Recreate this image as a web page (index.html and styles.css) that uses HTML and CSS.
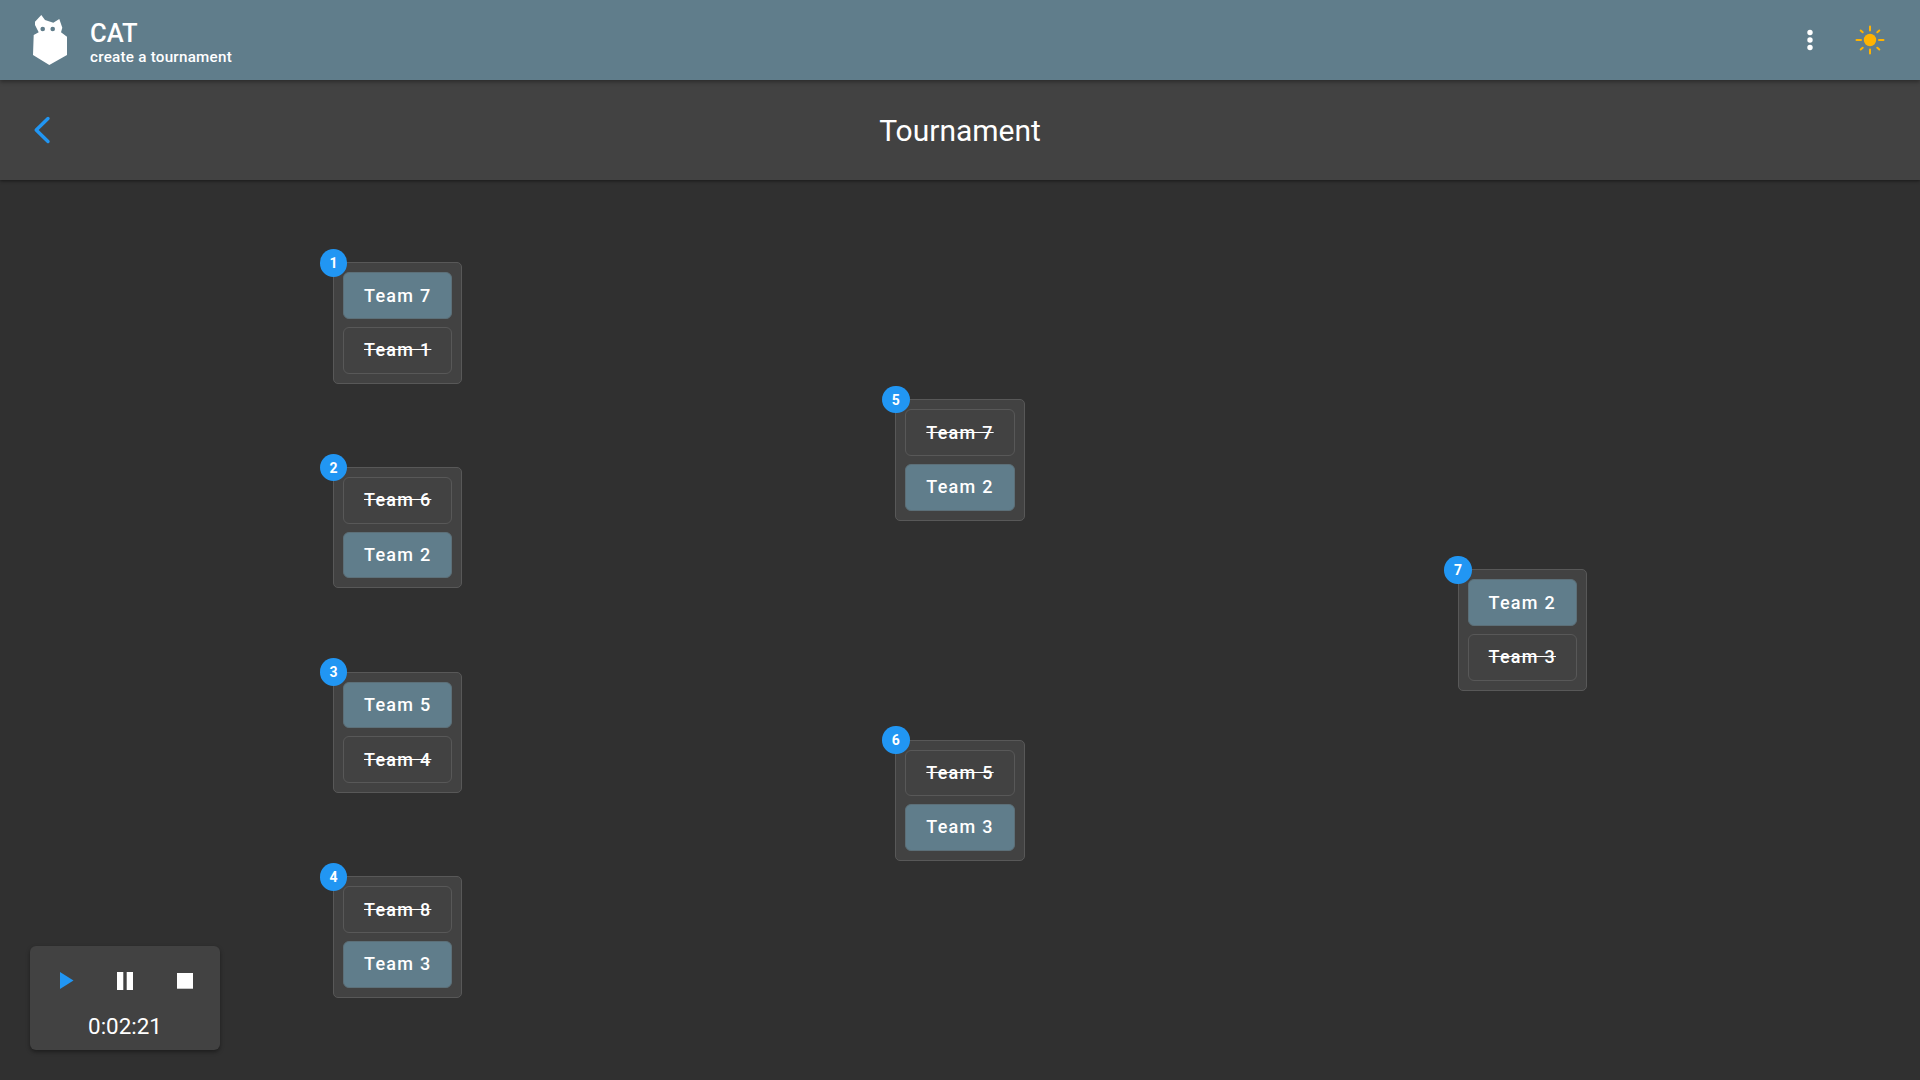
FILE: index.html
```html
<!DOCTYPE html>
<html lang="en">
<head>
<meta charset="utf-8">
<title>CAT - Tournament</title>
<link rel="stylesheet" href="styles.css">
</head>
<body>
<header class="appbar">
  <svg class="logo" width="34" height="50" viewBox="0 0 34 50">
    <path class="logo-fill" d="M8.300 0 L12 5 L20.300 7.700 L26.300 4 L29.300 12.700 L28 17.300 L34 21.700 L34 40 L16.300 50 L0 40 L0.700 20 L5.700 17.300 L2 10 L2 6.700 Z"/>
    <circle class="logo-eye" cx="9.700" cy="14" r="2.300"/>
    <circle class="logo-eye" cx="19.700" cy="14" r="2.300"/>
  </svg>
  <div class="brand">
    <div class="brand-name">CAT</div>
    <div class="brand-sub">create a tournament</div>
  </div>
  <div class="appbar-spacer"></div>
  <button class="icon-btn menu-btn" aria-label="menu">
    <svg width="6" height="20" viewBox="0 0 6 20"><circle cx="3" cy="2.500" r="2.700"/><circle cx="3" cy="10" r="2.700"/><circle cx="3" cy="17.500" r="2.700"/></svg>
  </button>
  <button class="icon-btn sun-btn" aria-label="theme">
    <svg width="30" height="30" viewBox="0 0 30 30">
      <circle class="sun-core" cx="15" cy="15" r="6.200"/>
      <g class="sun-rays">
        <path d="M15 1.500V5.500M15 24.500V28.500M1.500 15H6M24 15H28.500M5.700 5.500L7.700 7.300M24.300 5.500L22.300 7.300M5.700 24.500L7.700 22.700M24.300 24.500L22.300 22.700"/>
      </g>
    </svg>
  </button>
</header>
<section class="subbar">
  <button class="icon-btn back-btn" aria-label="back">
    <svg width="18" height="28" viewBox="0 0 18 28"><path d="M15 2.500 L3.200 14 L15 25.500"/></svg>
  </button>
  <h1 class="title">Tournament</h1>
</section>
<main class="bracket">
  <div class="round round-1">
    <div class="match"><span class="badge">1</span><div class="team win">Team 7</div><div class="team lose">Team 1</div></div>
    <div class="match"><span class="badge">2</span><div class="team lose">Team 6</div><div class="team win">Team 2</div></div>
    <div class="match"><span class="badge">3</span><div class="team win">Team 5</div><div class="team lose">Team 4</div></div>
    <div class="match"><span class="badge">4</span><div class="team lose">Team 8</div><div class="team win">Team 3</div></div>
  </div>
  <div class="round round-2">
    <div class="match"><span class="badge">5</span><div class="team lose">Team 7</div><div class="team win">Team 2</div></div>
    <div class="match"><span class="badge">6</span><div class="team lose">Team 5</div><div class="team win">Team 3</div></div>
  </div>
  <div class="round round-3">
    <div class="match"><span class="badge">7</span><div class="team win">Team 2</div><div class="team lose">Team 3</div></div>
  </div>
</main>
<aside class="timer">
  <div class="timer-controls">
    <svg class="ctl" width="24" height="24" viewBox="0 0 24 24"><path class="ctl-play" d="M7 3V20L20.500 11.500Z"/></svg>
    <svg class="ctl" width="24" height="24" viewBox="0 0 24 24"><path d="M4 3H10.300V21H4ZM13.700 3H20V21H13.700Z"/></svg>
    <svg class="ctl" width="24" height="24" viewBox="0 0 24 24"><path d="M4 4H20V19.700H4Z"/></svg>
  </div>
  <div class="timer-time">0:02:21</div>
</aside>
</body>
</html>
```

FILE: styles.css
```css
* { box-sizing: border-box; }
html, body { margin: 0; height: 100%; }
body {
  background: #303030;
  color: #fff;
  font-family: Roboto, "Liberation Sans", sans-serif;
  overflow: hidden;
  display: flex;
  flex-direction: column;
  height: 1080px;
}
.appbar {
  height: 80px;
  flex: none;
  background: #607d8b;
  display: flex;
  align-items: center;
  padding: 0 35px 0 33px;
  box-shadow: 0 2px 4px rgba(0,0,0,.35);
  position: relative;
  z-index: 2;
}
.logo { margin-right: 23px; }
.logo-fill { fill: #fff; }
.logo-eye { fill: #607d8b; }
.brand { padding-top: 4px; }
.brand-name { font-size: 25.600px; font-weight: 500; line-height: 29px; }
.brand-sub { font-size: 15.200px; font-weight: 500; letter-spacing: .25px; line-height: 18px; }
.appbar-spacer { flex: 1; }
.icon-btn { background: none; border: 0; padding: 0; display: flex; align-items: center; justify-content: center; }
.menu-btn { margin-right: 42px; }
.menu-btn svg { fill: #fff; overflow: visible; }
.sun-core { fill: #ffb300; }
.sun-rays path { stroke: #ffb300; stroke-width: 2; stroke-linecap: round; fill: none; }
.subbar {
  height: 100px;
  flex: none;
  background: #424242;
  display: flex;
  align-items: center;
  justify-content: center;
  position: relative;
  box-shadow: 0 1px 3px rgba(0,0,0,.5);
  z-index: 1;
}
.back-btn { position: absolute; left: 33px; top: 36px; }
.back-btn path { fill: none; stroke: #2196f3; stroke-width: 3.400; stroke-linecap: round; stroke-linejoin: round; }
.title { margin: 2px 0 0; font-size: 30px; font-weight: 400; line-height: 32px; }
.bracket {
  flex: 1;
  display: flex;
  justify-content: space-between;
  align-items: center;
  padding: 0 333px;
}
.round { display: flex; flex-direction: column; }
.round-1 { gap: 83.330px; }
.round-2 { gap: 219px; }
.match {
  position: relative;
  width: 129.400px;
  background: #424242;
  border: 1px solid #585858;
  border-radius: 5px;
  padding: 9px;
  display: flex;
  flex-direction: column;
  gap: 8px;
}
.badge {
  position: absolute;
  left: -14.200px;
  top: -14.200px;
  width: 27.400px;
  height: 27.400px;
  border-radius: 50%;
  background: #2196f3;
  color: #fff;
  font-size: 14px;
  font-weight: 700;
  display: flex;
  align-items: center;
  justify-content: center;
}
.team {
  height: 46.670px;
  border-radius: 6px;
  border: 1px solid #585858;
  padding-bottom: 1px;
  font-size: 18px;
  font-weight: 500;
  letter-spacing: 1.250px;
  display: flex;
  align-items: center;
  justify-content: center;
}
.team.win { background: #607d8b; border-color: #5c6f78; }
.team.lose { text-decoration: line-through; }
.timer {
  position: absolute;
  left: 30px;
  top: 946px;
  width: 190px;
  height: 104px;
  background: #424242;
  border-radius: 6px;
  box-shadow: 0 2px 4px rgba(0,0,0,.4);
  display: flex;
  flex-direction: column;
  align-items: center;
  padding-top: 23px;
}
.timer-controls { display: flex; gap: 36px; }
.ctl { fill: #fff; display: block; }
.ctl-play { fill: #2196f3; }
.timer-time { font-size: 22.400px; line-height: 26px; margin-top: 20px; }
```
